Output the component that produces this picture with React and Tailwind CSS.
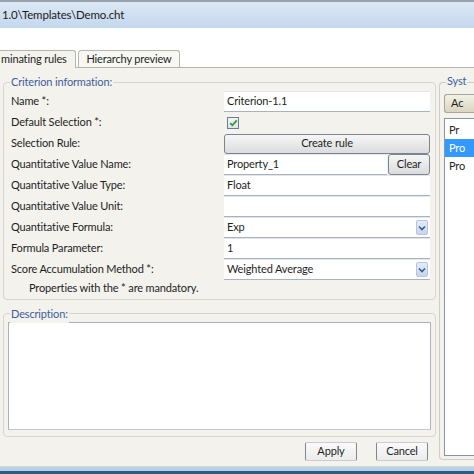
import React from 'react';

const rows = [
  'Name *:',
  'Default Selection *:',
  'Selection Rule:',
  'Quantitative Value Name:',
  'Quantitative Value Type:',
  'Quantitative Value Unit:',
  'Quantitative Formula:',
  'Formula Parameter:',
  'Score Accumulation Method *:',
];

const Chevron = () => (
  <div className="w-[12px] h-[15px] mr-[2px] rounded-[2px] bg-gradient-to-b from-[#e4ecf7] to-[#c6d6ee] border border-[#b4c6e0] flex items-center justify-center">
    <svg width="8" height="6" viewBox="0 0 8 6">
      <path d="M1 1.5 L4 4.5 L7 1.5" fill="none" stroke="#3b5a8a" strokeWidth="1.6" />
    </svg>
  </div>
);

const Field = ({ value, select }) => (
  <div className="h-[21px] flex items-center bg-white border-b border-[#a9b3bf] border-t border-t-[#e2e5ea] pl-[3px]">
    <span className="flex-1">{value}</span>
    {select && <Chevron />}
  </div>
);

const App = () => {
  return (
    <div className="w-[474px] h-[474px] overflow-hidden flex flex-col text-[11px] tracking-[-0.15px] text-[#1e1e1e] font-['Lato',sans-serif] bg-white">
      <div className="h-[2px] bg-[#9aa3ad]" />
      <div className="h-[26px] bg-gradient-to-b from-[#dde8f5] to-[#c3d7ee] flex items-center pl-[2px] text-[11.5px] text-[#1a1a1a]">
        1.0\Templates\Demo.cht
      </div>
      <div className="h-[22px] bg-white" />
      <div className="h-[18px] bg-white flex items-end border-b border-[#b7b4ab] relative whitespace-nowrap">
        <div className="h-[18px] w-[76px] border border-b-0 border-[#b7b4ab] border-l-0 rounded-tr-[3px] bg-[#f3f2ed] flex items-center pl-[1px] mb-[-1px]">
          minating rules
        </div>
        <div className="h-[17px] w-[102px] ml-[2px] border border-b-0 border-[#b7b4ab] rounded-t-[3px] bg-[#f7f7f4] flex items-center justify-center">
          Hierarchy preview
        </div>
      </div>
      <div className="flex-1 bg-[#f3f2ed] flex">
        <div className="w-[444px] pl-[3px] pt-[14px] flex flex-col">
          <div className="relative border border-[#d7d5cd] rounded-[4px] h-[218px] pt-[8px] pl-[7px] pr-[5px]">
            <div className="absolute -top-[9px] left-[6px] px-[1px] bg-[#f3f2ed] text-[#3d5d9c]">Criterion information:</div>
            {rows.map((label, i) => (
              <div key={label} className="h-[21px] flex items-center">
                <div className="w-[213px] shrink-0">{label}</div>
                <div className="flex-1">
                  {i === 0 && <Field value="Criterion-1.1" />}
                  {i === 1 && (
                    <div className="h-[21px] flex items-center pl-[3px]">
                      <div className="w-[12px] h-[12px] border border-[#6c7d93] bg-gradient-to-b from-[#f0f3f7] to-[#dfe5ec] flex items-center justify-center">
                        <svg width="9" height="8" viewBox="0 0 9 8">
                          <path d="M1.2 4.2 L3.4 6.3 L7.8 1.4" fill="none" stroke="#2e9a2a" strokeWidth="1.8" />
                        </svg>
                      </div>
                    </div>
                  )}
                  {i === 2 && (
                    <div className="h-[20px] rounded-[3px] border border-[#7a8593] bg-gradient-to-b from-[#f6f6f6] to-[#dcdcdc] flex items-center justify-center">
                      Create rule
                    </div>
                  )}
                  {i === 3 && (
                    <div className="flex">
                      <div className="flex-1"><Field value="Property_1" /></div>
                      <div className="w-[42px] h-[21px] ml-[1px] rounded-[3px] border border-[#7a8593] bg-gradient-to-b from-[#f6f6f6] to-[#dcdcdc] flex items-center justify-center">
                        Clear
                      </div>
                    </div>
                  )}
                  {i === 4 && <Field value="Float" />}
                  {i === 5 && <Field value="" />}
                  {i === 6 && <Field value="Exp" select />}
                  {i === 7 && <Field value="1" />}
                  {i === 8 && <Field value="Weighted Average" select />}
                </div>
              </div>
            ))}
            <div className="pl-[18px]">Properties with the * are mandatory.</div>
          </div>
          <div className="relative mt-[13px] border border-[#d7d5cd] rounded-[4px] h-[124px] pt-[8px] px-[4px]">
            <div className="absolute -top-[8px] left-[6px] px-[1px] bg-[#f3f2ed] text-[#3d5d9c]">Description:</div>
            <div className="h-[108px] bg-white border border-[#a9b3bf] border-b-[#c4c8ce]" />
          </div>
          <div className="flex justify-end gap-[19px] pr-[8px] mt-[5px]">
            <div className="w-[52px] h-[19px] border border-[#7c8794] border-y-[#c9ccd1] rounded-[2px] bg-gradient-to-b from-[#fafafa] to-[#ececec] flex items-center justify-center">Apply</div>
            <div className="w-[52px] h-[19px] border border-[#7c8794] border-y-[#c9ccd1] rounded-[2px] bg-gradient-to-b from-[#fafafa] to-[#ececec] flex items-center justify-center">Cancel</div>
          </div>
        </div>
        <div className="flex-1 pl-[3px] pt-[14px] flex flex-col">
          <div className="relative border-l border-t border-b border-[#cfcdc5] rounded-l-[4px] h-[378px] pl-[4px] pt-[11px]">
            <div className="absolute -top-[10px] left-[6px] px-[1px] bg-[#f3f2ed] text-[#3d5d9c]">Syst</div>
            <div className="h-[19px] w-[30px] border border-[#a9a695] rounded-l-[3px] border-r-0 bg-gradient-to-b from-[#f4f2e6] to-[#d9d5c0] flex items-center pl-[6px]">Ac</div>
            <div className="mt-[5px] h-[338px] border border-[#8a95a3] border-r-0 bg-white flex flex-col pt-[2px]">
              <div className="h-[18px] pl-[4px] flex items-center">Pr</div>
              <div className="h-[18px] pl-[4px] flex items-center bg-[#3399ff] text-white">Pro</div>
              <div className="h-[18px] pl-[4px] flex items-center">Pro</div>
            </div>
          </div>
        </div>
      </div>
      <div className="h-[1px] bg-[#d8d6ce]" />
      <div className="h-[4px] bg-[#b9d1e8]" />
      <div className="h-[3px] bg-[#2f5d7d]" />
    </div>
  );
};

export default App;
